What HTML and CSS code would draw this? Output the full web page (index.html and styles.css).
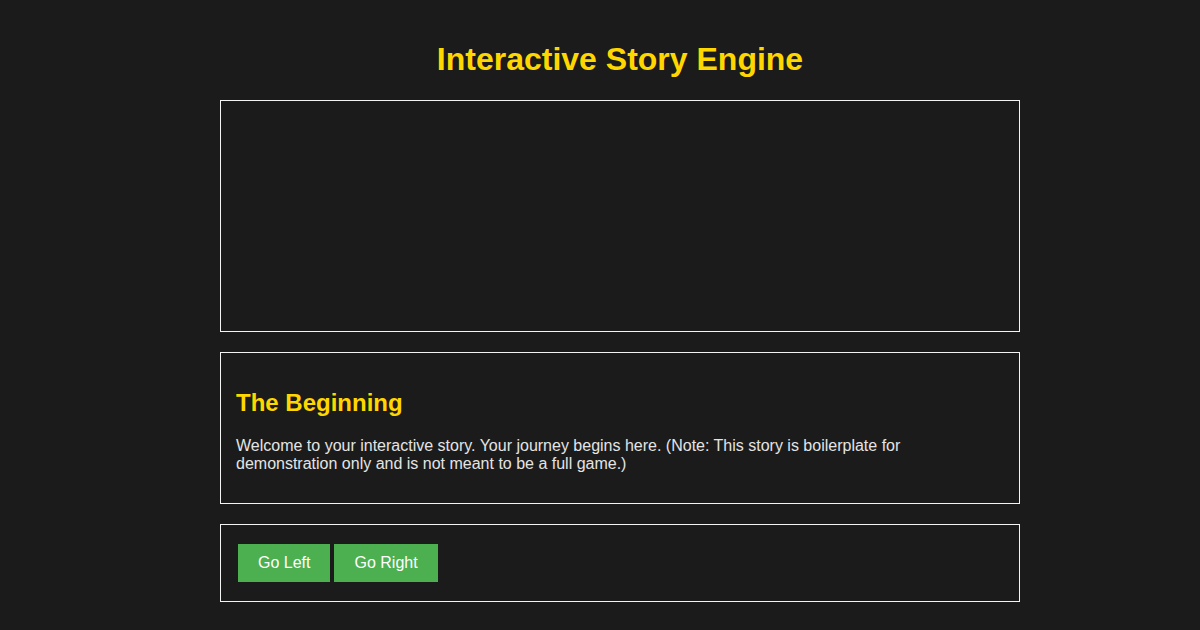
FILE: index.html
```html
<!DOCTYPE html>
<html lang="en">
<head>
  <meta charset="UTF-8" />
  <meta name="viewport" content="width=device-width, initial-scale=1.0" />
  <title>Interactive Story Engine</title>
  <link rel="stylesheet" href="styles.css">
</head>
<body>
  <div class="story-container">
    <h1>Interactive Story Engine</h1>
    <div class="scene-view"></div>
    <div class="scene-text">
      <h2>The Beginning</h2>
      <p>Welcome to your interactive story. Your journey begins here. (Note: This story is boilerplate for demonstration only and is not meant to be a full game.)</p>
    </div>
    <div class="choices">
      <button type="button">Go Left</button>
      <button type="button">Go Right</button>
    </div>
  </div>
</body>
</html>
```

FILE: styles.css
```css
body {
  font-family: "Liberation Sans", Arial, sans-serif;
  background: #1b1b1b;
  color: #e4e4e4;
  margin: 0;
  padding: 20px 0 20px 40px;
}

.story-container {
  max-width: 800px;
  margin: 0 auto;
}

h1 {
  text-align: center;
  color: #ffd700;
  font-size: 32px;
  margin: 21px 0 22px;
}

.scene-view {
  height: 230px;
  border: 1px solid #f4f4f4;
  margin-bottom: 20px;
}

.scene-text {
  border: 1px solid #f4f4f4;
  padding: 15px;
  margin-bottom: 20px;
}

.scene-text h2 {
  color: #ffd700;
  font-size: 24px;
  margin: 21px 0 20px;
}

.scene-text p {
  font-size: 16px;
  margin: 16px 0 15px;
}

.choices {
  border: 1px solid #f4f4f4;
  padding: 19px 17px;
  display: flex;
  gap: 4px;
}

button {
  font-family: "Liberation Sans", Arial, sans-serif;
  padding: 10px 20px;
  background-color: #4caf50;
  border: none;
  color: #ffffff;
  font-size: 16px;
  cursor: pointer;
}

button:hover {
  background-color: #45a049;
}
```
